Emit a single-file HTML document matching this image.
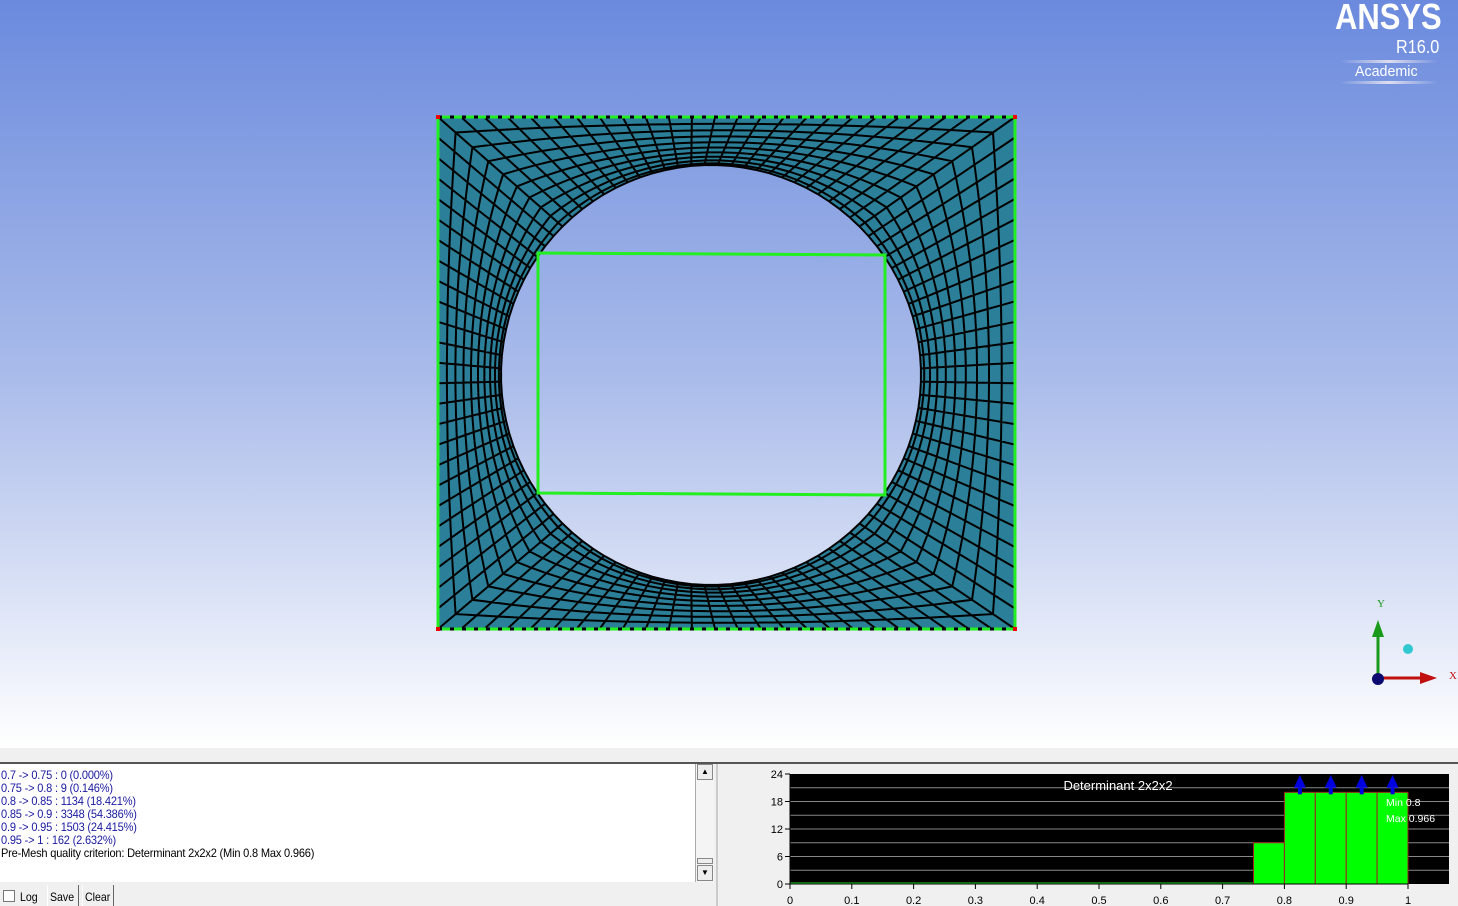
<!DOCTYPE html>
<html><head><meta charset="utf-8"><style>
body{margin:0;width:1458px;height:906px;overflow:hidden;font-family:"Liberation Sans",sans-serif;position:relative;background:#f0f0f0}
#vp{position:absolute;left:0;top:0;width:1458px;height:748px;background:linear-gradient(#6b8ade 0%,#8aa3e3 25%,#a9bbea 50%,#d3dcf4 75%,#ffffff 100%)}
.t{position:absolute;white-space:nowrap}
</style></head><body>
<div id="vp"></div>
<div style="position:absolute;left:0;top:748px;width:1458px;height:14px;background:#f0f0f0;border-bottom:2px solid #555"></div>
<svg id="m" width="1458" height="748" style="position:absolute;left:0;top:0"></svg>
<div class="t" style="left:1335px;top:-4px;color:#fff;font-size:36px;font-weight:bold;transform:scaleX(0.86);transform-origin:left">ANSYS</div>
<div class="t" style="left:1396px;top:37px;color:#fff;font-size:18px;transform:scaleX(0.9);transform-origin:left">R16.0</div>
<div style="position:absolute;left:1340px;top:60px;width:98px;height:3px;background:linear-gradient(90deg,transparent,#dde,transparent)"></div>
<div class="t" style="left:1355px;top:63px;color:#fff;font-size:15px;transform:scaleX(0.95);transform-origin:left">Academic</div>
<div style="position:absolute;left:1340px;top:81px;width:98px;height:3px;background:linear-gradient(90deg,transparent,#dde,transparent)"></div>
<div style="position:absolute;left:0;top:764px;width:695px;height:118px;background:#fff;border-right:1px solid #aaa"></div>
<div style="position:absolute;left:696px;top:764px;width:18px;height:118px;background:#f4f4f4"></div>
<div style="position:absolute;left:697px;top:764px;width:16px;height:16px;background:#eee;border:1px solid #888;box-sizing:border-box;font-size:8px;text-align:center;line-height:14px">▲</div>
<div style="position:absolute;left:697px;top:858px;width:16px;height:6px;background:#eee;border:1px solid #888;box-sizing:border-box"></div>
<div style="position:absolute;left:697px;top:865px;width:16px;height:16px;background:#eee;border:1px solid #888;box-sizing:border-box;font-size:8px;text-align:center;line-height:14px">▼</div>
<div style="position:absolute;left:716px;top:764px;width:2px;height:142px;background:#ccc"></div>
<div class="t" style="left:1px;top:769px;font-size:12px;line-height:13px;color:#1a1aa0;transform:scaleX(0.92);transform-origin:left;letter-spacing:-0.2px">0.7 -&gt; 0.75 : 0 (0.000%)<br>0.75 -&gt; 0.8 : 9 (0.146%)<br>0.8 -&gt; 0.85 : 1134 (18.421%)<br>0.85 -&gt; 0.9 : 3348 (54.386%)<br>0.9 -&gt; 0.95 : 1503 (24.415%)<br>0.95 -&gt; 1 : 162 (2.632%)<br><span style="color:#000">Pre-Mesh quality criterion: Determinant 2x2x2 (Min 0.8 Max 0.966)</span></div>
<div style="position:absolute;left:3px;top:890px;width:10px;height:10px;border:1px solid #777;background:#fff"></div>
<div class="t" style="left:20px;top:890px;font-size:12px;transform:scaleX(0.88);transform-origin:left">Log</div>
<div style="position:absolute;left:47px;top:885px;width:30px;height:21px;border-right:1px solid #666;border-left:1px solid #fff"></div>
<div class="t" style="left:50px;top:890px;font-size:12px;transform:scaleX(0.88);transform-origin:left">Save</div>
<div style="position:absolute;left:82px;top:885px;width:30px;height:21px;border-right:1px solid #666;border-left:1px solid #fff"></div>
<div class="t" style="left:85px;top:890px;font-size:12px;transform:scaleX(0.88);transform-origin:left">Clear</div>
<svg id="c" width="720" height="144" style="position:absolute;left:738px;top:762px"></svg>
<script>
const m=document.getElementById('m');
let h='';
const X0=438,X1=1015,Y0=117,Y1=629,cx=711,cy=375,R=210;
const W=X1-X0,H=Y1-Y0;
function sq(u){u=((u%4)+4)%4;
 if(u<1)return[X0+W*u,Y0];
 if(u<2)return[X1,Y0+H*(u-1)];
 if(u<3)return[X1-W*(u-2),Y1];
 return[X0,Y1-H*(u-3)];}
function ci(u){const a=(-135+90*u)*Math.PI/180;return[cx+R*Math.cos(a),cy+R*Math.sin(a)];}
const NT=100,NR=10;
function P(i,j){const u=i/NT*4;const s=Math.pow(j/NR,1.45);const a=ci(u),b=sq(u);return[a[0]+(b[0]-a[0])*s,a[1]+(b[1]-a[1])*s];}
let outer='',inner='';
for(let i=0;i<=NT;i++){const p=P(i,NR);outer+=(i?'L':'M')+p[0].toFixed(1)+' '+p[1].toFixed(1);}
for(let i=NT;i>=0;i--){const p=P(i,0);inner+=(i==NT?'M':'L')+p[0].toFixed(1)+' '+p[1].toFixed(1);}
h+=`<path d="${outer}Z${inner}Z" fill="#2b7f98" fill-rule="evenodd"/>`;
let d='';
for(let j=0;j<=NR;j++){for(let i=0;i<=NT;i++){const p=P(i,j);d+=(i?'L':'M')+p[0].toFixed(1)+' '+p[1].toFixed(1);}}
for(let i=0;i<NT;i++){for(let j=0;j<=NR;j++){const p=P(i,j);d+=(j?'L':'M')+p[0].toFixed(1)+' '+p[1].toFixed(1);}}
h+=`<path d="${d}" fill="none" stroke="#000" stroke-width="2"/>`;
h+=`<rect x="${X0}" y="${Y0}" width="${W}" height="${H}" fill="none" stroke="#22ee22" stroke-width="3"/>`;
h+=`<line x1="${X0}" y1="${Y0}" x2="${X1}" y2="${Y0}" stroke="#000" stroke-width="3" stroke-dasharray="4 8"/>`;
h+=`<line x1="${X0}" y1="${Y1}" x2="${X1}" y2="${Y1}" stroke="#000" stroke-width="3" stroke-dasharray="4 8"/>`;
h+=`<path d="M538 253L885 255L885 495L538 493Z" fill="none" stroke="#22ee22" stroke-width="3"/>`;
for(const [x,y] of [[X0,Y0],[X1,Y0],[X0,Y1],[X1,Y1]])h+=`<rect x="${x-2}" y="${y-2}" width="4" height="4" fill="#e00"/>`;
h+=`<line x1="1378" y1="678" x2="1378" y2="635" stroke="#1a9a1a" stroke-width="3"/><path d="M1372 637L1378 620L1384 637Z" fill="#1a9a1a"/>`;
h+=`<line x1="1378" y1="678" x2="1422" y2="678" stroke="#c01010" stroke-width="3"/><path d="M1420 672L1437 678L1420 684Z" fill="#c01010"/>`;
h+=`<circle cx="1378" cy="679" r="6" fill="#0a0a70"/><circle cx="1408" cy="649" r="5" fill="#30c8d0"/>`;
h+=`<text x="1377" y="607" font-size="11" fill="#1a9a1a" font-family="Liberation Serif">Y</text><text x="1449" y="679" font-size="11" fill="#c01010" font-family="Liberation Serif">X</text>`;
m.innerHTML=h;
const c=document.getElementById('c');let g='';
const ox=790-738, x1=1408-738, yTop=774-762, yB=884-762;
const sx=v=>ox+(x1-ox)*v, sy=v=>yB-(yB-yTop)*v/24;
g+=`<rect x="${ox}" y="${yTop}" width="${1449-738-ox}" height="${yB-yTop}" fill="#000"/>`;
for(let v=3;v<24;v+=3)g+=`<line x1="${ox}" x2="${1449-738}" y1="${sy(v)}" y2="${sy(v)}" stroke="#888" stroke-width="1"/>`;
g+=`<line x1="${ox}" x2="${sx(0.75)}" y1="${yB-1}" y2="${yB-1}" stroke="#2c2" stroke-width="1"/>`;
g+=`<rect x="${sx(0.75)}" y="${sy(9)}" width="${sx(0.8)-sx(0.75)}" height="${yB-sy(9)}" fill="#00ff00" stroke="#a02020"/>`;
for(let k=0;k<4;k++){const a=0.8+0.05*k;g+=`<rect x="${sx(a)}" y="${sy(20)}" width="${sx(a+0.05)-sx(a)}" height="${yB-sy(20)}" fill="#00ff00" stroke="#a02020"/>`;
 const mx=(sx(a)+sx(a+0.05))/2;g+=`<rect x="${mx-2}" y="${sy(21)}" width="4" height="${sy(20)-sy(21)+2}" fill="#0000e0"/><path d="M${mx-6} ${sy(21)}L${mx} ${sy(24)+1}L${mx+6} ${sy(21)}Z" fill="#0000e0"/>`;}
g+=`<line x1="${ox}" y1="${yTop}" x2="${ox}" y2="${yB+5}" stroke="#000"/>`;
for(let v=0;v<=24;v+=6){g+=`<line x1="${ox-5}" x2="${ox}" y1="${sy(v)}" y2="${sy(v)}" stroke="#000"/><text x="${ox-7}" y="${sy(v)+4}" font-size="11" text-anchor="end">${v}</text>`;}
g+=`<line x1="${ox}" x2="${x1}" y1="${yB}" y2="${yB}" stroke="#000"/>`;
for(let k=0;k<=10;k++){const x=sx(k/10);g+=`<line x1="${x}" x2="${x}" y1="${yB}" y2="${yB+5}" stroke="#000"/><text x="${x}" y="${yB+20}" font-size="11" text-anchor="middle">${k==0?'0':k==10?'1':'0.'+k}</text>`;}
g+=`<text x="${1118-738}" y="${789-762+1}" font-size="13" fill="#fff" text-anchor="middle">Determinant 2x2x2</text>`;
g+=`<text x="${1386-738}" y="${806-762}" font-size="10.5" fill="#fff">Min 0.8</text><text x="${1386-738}" y="${822-762}" font-size="10.5" fill="#fff">Max 0.966</text>`;
c.innerHTML=g;
</script>
</body></html>
